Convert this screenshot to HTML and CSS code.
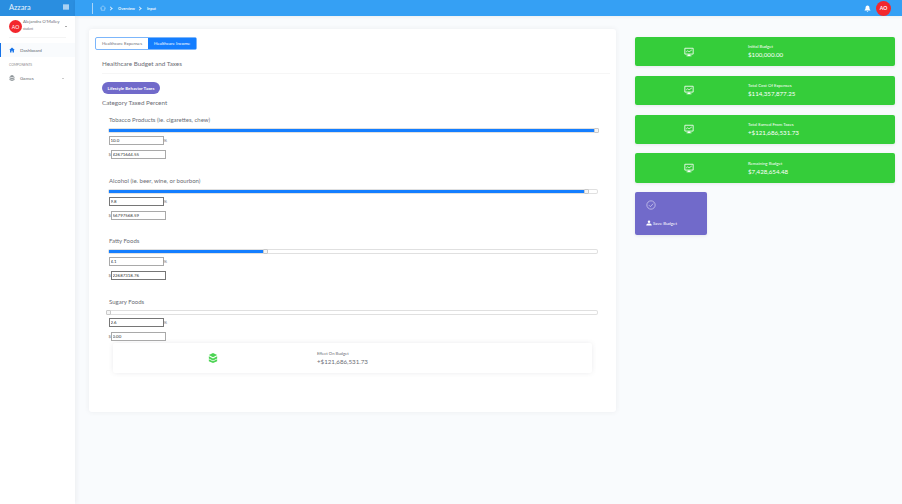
FILE: index.html
```html
<!DOCTYPE html>
<html>
    <head>
        <title>Azzara</title>
        <link rel="stylesheet" href="styles.css">
    </head>
<body>
    <aside class="sidebar">
        <div class="brand">
            <span>Azzara</span>
            <svg class="brand-icon" viewBox="0 0 12 10"><path d="M0 0h12v2.600H0zM0 3.700h12v2.600H0zM0 7.400h12V10H0z" fill="#d5e8f8"/></svg>
        </div>
        <div class="user">
            <div class="avatar">AO</div>
            <div class="user-text">
                <div class="user-name">Alejandra O'Malley</div>
                <div class="user-role">student</div>
            </div>
            <span class="caret"></span>
        </div>
        <div class="nav-item active">
            <svg class="nav-icon" viewBox="0 0 12 12"><path d="M6 1 0.500 6.200h1.600V11h2.800V7.600h2.200V11h2.800V6.200h1.600z" fill="#1572e8"/></svg>
            <span>Dashboard</span>
        </div>
        <div class="nav-heading">COMPONENTS</div>
        <div class="nav-item">
            <svg class="nav-icon" viewBox="0 0 12 12"><path d="M6 0 11 2.500 6 5 1 2.500zM1 4 6 6.500 11 4V6.500L6 9 1 6.500zM1 7.500 6 10l5-2.500V10L6 12 1 10z" fill="#8d9498"/></svg>
            <span>Games</span>
            <span class="nav-caret"></span>
        </div>
    </aside>

    <div class="page">
        <header class="topbar">
            <div class="divider"></div>
            <svg class="home" viewBox="0 0 12 12"><path d="M6 1.500 1 6h1.500v4.500h7V6H11z" fill="none" stroke="#d9ecfc" stroke-width="1"/></svg>
            <span class="crumb-sep"></span>
            <span class="crumb">Overview</span>
            <span class="crumb-sep"></span>
            <span class="crumb">Input</span>
            <svg class="bell" viewBox="0 0 12 12"><path d="M6 0.800c-2.200 0-3.300 1.700-3.300 3.700 0 2.200-.9 3.300-1.700 4.100v.8h10v-.8c-.8-.8-1.700-1.900-1.700-4.100 0-2-1.100-3.700-3.300-3.700zM4.700 10.200a1.300 1.300 0 0 0 2.600 0z" fill="#fff"/></svg>
            <div class="avatar top-avatar">AO</div>
        </header>

        <main class="content">
            <section class="card">
                <div class="tabs">
                    <div class="tab">Healthcare Expenses</div>
                    <div class="tab tab-on">Healthcare Income</div>
                </div>
                <h2 class="card-title">Healthcare Budget and Taxes</h2>
                <div class="card-body">
                    <div class="pill">Lifestyle Behavior Taxes</div>
                    <h3 class="sub-title">Category Taxed Percent</h3>

                    <div class="tax">
                        <div class="tax-label">Tobacco Products (ie. cigarettes, chew)</div>
                        <div class="track"><div class="fill" style="width: 100%"></div><div class="thumb" style="left: 100%"></div></div>
                        <div class="field"><input class="num" value="10.0"><span>%</span></div>
                        <div class="field field-money"><span>$</span><input class="num" value="42671644.55"></div>
                    </div>

                    <div class="tax">
                        <div class="tax-label">Alcohol (ie. beer, wine, or bourbon)</div>
                        <div class="track"><div class="fill" style="width: 98%"></div><div class="thumb" style="left: 98%"></div></div>
                        <div class="field"><input class="num dark" value="9.8"><span>%</span></div>
                        <div class="field field-money"><span>$</span><input class="num" value="56797568.59"></div>
                    </div>

                    <div class="tax">
                        <div class="tax-label">Fatty Foods</div>
                        <div class="track"><div class="fill" style="width: 32.3%"></div><div class="thumb" style="left: 32.3%"></div></div>
                        <div class="field"><input class="num" value="4.1"><span>%</span></div>
                        <div class="field field-money"><span>$</span><input class="num dark" value="22687318.76"></div>
                    </div>

                    <div class="tax tax-last">
                        <div class="tax-label">Sugary Foods</div>
                        <div class="track"><div class="thumb" style="left: 0"></div></div>
                        <div class="field"><input class="num dark" value="2.6"><span>%</span></div>
                        <div class="field field-money"><span>$</span><input class="num" value="0.00"></div>
                    </div>

                    <div class="effect">
                        <div class="effect-icon">
                            <svg viewBox="0 0 12 12"><path d="M6 0 11 2.500 6 5 1 2.500zM1 4 6 6.500 11 4V6.500L6 9 1 6.500zM1 7.500 6 10l5-2.500V10L6 12 1 10z" fill="#4cd453"/></svg>
                        </div>
                        <div class="effect-text">
                            <div class="effect-label">Effect On Budget</div>
                            <div class="effect-value">+$121,686,531.73</div>
                        </div>
                    </div>
                </div>
            </section>

            <section class="side">
                <div class="stat">
                    <div class="stat-icon"><svg viewBox="0 0 12 12"><use href="#monitor"/></svg></div>
                    <div><div class="stat-label">Initial Budget</div><div class="stat-value">$100,000.00</div></div>
                </div>
                <div class="stat">
                    <div class="stat-icon"><svg viewBox="0 0 12 12"><use href="#monitor"/></svg></div>
                    <div><div class="stat-label">Total Cost Of Expenses</div><div class="stat-value">$114,357,877.25</div></div>
                </div>
                <div class="stat">
                    <div class="stat-icon"><svg viewBox="0 0 12 12"><use href="#monitor"/></svg></div>
                    <div><div class="stat-label">Total Earned From Taxes</div><div class="stat-value">+$121,686,531.73</div></div>
                </div>
                <div class="stat">
                    <div class="stat-icon"><svg viewBox="0 0 12 12"><use href="#monitor"/></svg></div>
                    <div><div class="stat-label">Remaining Budget</div><div class="stat-value">$7,428,654.48</div></div>
                </div>
                <div class="save">
                    <svg class="save-check" viewBox="0 0 12 12"><circle cx="6" cy="6" r="5" fill="none" stroke="#dcd8f3" stroke-width=".8"/><path d="M3.500 6.200 5.300 8l3.300-3.600" fill="none" stroke="#dcd8f3" stroke-width=".8"/></svg>
                    <div class="save-label">
                        <svg viewBox="0 0 12 12"><circle cx="6" cy="3.500" r="2.500" fill="#fff"/><path d="M.5 11c0-2.800 2-4 5.500-4s5.500 1.200 5.500 4z" fill="#fff"/></svg>
                        <span>Save Budget</span>
                    </div>
                </div>
            </section>
        </main>
    </div>

    <svg class="defs" width="0" height="0">
        <symbol id="monitor" viewBox="0 0 12 12">
            <path d="M1 1.500h10v7H1z" fill="none" stroke="#fff" stroke-width="1"/>
            <path d="M2.500 6 4.500 4.500 6 5.800 9.500 3.500" fill="none" stroke="#fff" stroke-width=".8"/>
            <path d="M4.500 9h3v1.200h1.500v.8H3v-.8h1.500z" fill="#fff"/>
        </symbol>
    </svg>
</body>
</html>
```

FILE: styles.css
```css
* {
    box-sizing: border-box;
}

body {
    font-family: Lato, Arial, sans-serif;
    background-color: #f9fbfd;
    color: #6b6d75;
    display: flex;
    height: 504px;
    margin: 0;
    overflow: hidden;
}

.defs {
    display: none;
}

.sidebar {
    width: 75px;
    flex-shrink: 0;
    background-color: #fff;
    box-shadow: 2px 0 4px rgba(69, 65, 78, 0.06);
    font-size: 4.600px;
}

.brand {
    height: 16px;
    background-color: #2a8ee0;
    color: #e8f3fc;
    font-size: 7.400px;
    padding: 0 6px 2px 9px;
    display: flex;
    align-items: center;
    justify-content: space-between;
}

.brand-icon {
    width: 6px;
    height: 6px;
}

.user {
    height: 22px;
    margin: 0 9px;
    display: flex;
    align-items: center;
    gap: 1px;
    border-bottom: 1px solid #f4f4f4;
}

.avatar {
    width: 13px;
    height: 13px;
    border-radius: 50%;
    background-color: #f3272d;
    color: #fff;
    font-size: 5px;
    display: flex;
    align-items: center;
    justify-content: center;
    flex-shrink: 0;
}

.user-text {
    line-height: 7px;
    font-size: 4.400px;
    margin-top: -2px;
    white-space: nowrap;
}

.user-role {
    font-size: 3px;
    margin-top: 1px;
}

.caret {
    border: 1.500px solid transparent;
    border-top-color: #555;
    margin-top: 1px;
    margin-left: 4px;
}

.nav-item {
    height: 14px;
    padding-left: 9px;
    margin-top: 5px;
    display: flex;
    align-items: center;
    gap: 5px;
}

.nav-item.active {
    background-color: #f9fbfd;
    border-left: 1px solid #1572e8;
    padding-left: 8px;
}

.nav-icon {
    width: 6px;
    height: 6px;
}

.nav-heading {
    font-size: 3.300px;
    color: #8a8a8a;
    padding-left: 9px;
    margin-top: 6px;
    height: 7px;
}

.nav-heading + .nav-item {
    margin-top: 1px;
}

.nav-caret {
    margin-left: auto;
    margin-right: 11px;
    border: 1.500px solid transparent;
    border-top-color: #999;
    margin-top: 1px;
}

.page {
    flex: 1;
    min-width: 0;
}

.topbar {
    height: 16px;
    background-color: #35a0f4;
    color: #eef7fe;
    display: flex;
    align-items: center;
    padding-left: 17px;
    padding-right: 11px;
    font-size: 3.900px;
    font-weight: 700;
    box-shadow: 0 1px 3px rgba(0, 0, 0, 0.05);
}

.divider {
    width: 1px;
    height: 11px;
    background-color: #a9d5f9;
    margin-right: 7px;
}

.home {
    width: 6px;
    height: 6px;
}

.crumb-sep {
    width: 3px;
    height: 3px;
    border-top: 1px solid #d9ecfc;
    border-right: 1px solid #d9ecfc;
    transform: rotate(45deg);
    margin: 0 6px 0 3px;
}

.bell {
    width: 7px;
    height: 7px;
    margin-left: auto;
    margin-right: 5px;
}

.top-avatar {
    width: 15px;
    height: 15px;
}

.content {
    display: flex;
    align-items: flex-start;
    padding: 13px 7px 0 14px;
    gap: 19px;
}

.card {
    width: 527px;
    height: 383px;
    flex-shrink: 0;
    background-color: #fff;
    border-radius: 3px;
    box-shadow: 0 0 5px rgba(69, 65, 78, 0.08);
    padding: 8px 6px 0;
}

.tabs {
    display: flex;
    width: 102px;
    height: 13px;
    border: 1px solid #7cb6fb;
    border-radius: 2px;
    font-size: 4.400px;
}

.tab {
    width: 52px;
    display: flex;
    align-items: center;
    justify-content: center;
    white-space: nowrap;
}

.tab-on {
    flex: 1;
    background-color: #147eff;
    color: #fff;
}

.card-title {
    font-size: 6.300px;
    font-weight: 400;
    margin: 0 0 0 7px;
    height: 24px;
    line-height: 28px;
    border-bottom: 1px solid #f6f6f6;
}

.card-body {
    padding: 8px 7px 0;
}

.pill {
    width: 58px;
    height: 12px;
    border-radius: 6px;
    background-color: #716aca;
    color: #fff;
    font-size: 4.400px;
    font-weight: 700;
    display: flex;
    align-items: center;
    justify-content: center;
    white-space: nowrap;
}

.sub-title {
    font-size: 6.300px;
    font-weight: 400;
    margin: 3px 0 0;
    height: 11px;
    line-height: 11px;
}

.tax {
    margin-left: 6.500px;
    height: 60.700px;
}

.tax-last {
    height: 53px;
}

.tax-label {
    font-size: 6px;
    padding: 7px 0 0 0.500px;
    height: 21px;
    line-height: 10px;
}

.track {
    width: 488px;
    height: 3px;
    background-color: #fff;
    box-shadow: 0 0 0 1px #e0e0e0;
    border-radius: 1px;
    position: relative;
}

.fill {
    height: 100%;
    background-color: #147eff;
}

.thumb {
    position: absolute;
    top: -1px;
    width: 5px;
    height: 5px;
    margin-left: -3px;
    background-color: #f5f5f5;
    border: 1px solid #c9c9c9;
    border-radius: 1px;
}

.field {
    margin-top: 4px;
    display: flex;
    align-items: center;
    font-size: 4.400px;
    height: 9px;
    color: #777;
}

.field-money {
    margin-top: 5px;
}

.field-money span {
    width: 2px;
}

.num {
    width: 55px;
    height: 9px;
    padding: 0 1px;
    border: 1px solid #a9a9a9;
    font-family: Lato, Arial, sans-serif;
    font-size: 4.400px;
    color: #333;
    background-color: #fff;
}

.num.dark {
    border-color: #767676;
}

.effect {
    width: 479px;
    height: 30px;
    margin-left: 11px;
    display: flex;
    align-items: center;
    background-color: #fff;
    border-radius: 2px;
    box-shadow: 0 0 5px rgba(69, 65, 78, 0.1);
}

.effect-icon {
    width: 200px;
    display: flex;
    justify-content: center;
}

.effect-icon svg {
    width: 10px;
    height: 10px;
}

.effect-text {
    margin-left: 4px;
}

.effect-label {
    font-size: 4.200px;
    line-height: 7px;
}

.effect-value {
    font-size: 6.200px;
    line-height: 10px;
}

.side {
    width: 260px;
    padding-top: 8px;
}

.stat {
    height: 29.300px;
    margin-bottom: 9.500px;
    background-color: #35cd3a;
    color: #fff;
    border-radius: 2px;
    display: flex;
    align-items: center;
    box-shadow: 0 1px 3px rgba(69, 65, 78, 0.1);
}

.stat-icon {
    width: 108px;
    margin-right: 5px;
    display: flex;
    justify-content: center;
}

.stat-icon svg {
    width: 10px;
    height: 10px;
}

.stat-label {
    font-size: 4.300px;
    line-height: 7px;
}

.stat-value {
    font-size: 6.200px;
    line-height: 10px;
}

.save {
    width: 72px;
    height: 43px;
    background-color: #716aca;
    border-radius: 2px;
    color: #fff;
    padding: 8px 11px;
    box-shadow: 0 1px 3px rgba(69, 65, 78, 0.1);
}

.save-check {
    display: block;
    width: 10px;
    height: 10px;
}

.save-label {
    display: flex;
    align-items: center;
    gap: 1px;
    font-size: 4.400px;
    margin-top: 10px;
}

.save-label svg {
    width: 6px;
    height: 6px;
}
```
